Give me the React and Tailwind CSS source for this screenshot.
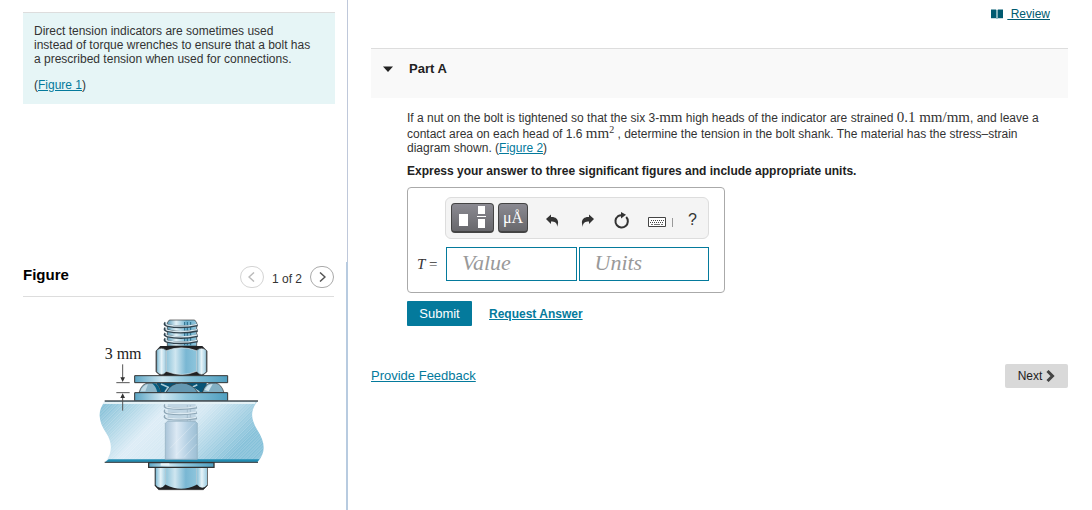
import { useState } from "react";

const LINK = "text-[#047a9c] underline";

function MathText({ children }) {
  return <span className="font-['Liberation_Serif',serif] text-[15px] leading-4">{children}</span>;
}

function Triangle() {
  return (
    <svg width="10" height="6" viewBox="0 0 10 6" aria-hidden="true">
      <path d="M0 .5h10L5 6z" fill="#222" />
    </svg>
  );
}

function BookIcon() {
  return (
    <svg width="12" height="10" viewBox="0 0 12 10" aria-hidden="true">
      <path d="M0 .5h5.2v8.5H0zM6.8.5H12v8.5H6.8z" fill="#005a70" />
      <path d="M5.2 1h1.6v9H5.2z" fill="#6fa5b2" />
      <path d="M0 9h12v.6H0z" fill="#a3c3cc" />
    </svg>
  );
}

function Chevron({ flip }) {
  return (
    <svg width="7" height="10" viewBox="0 0 7 10" fill="none" aria-hidden="true">
      <path
        d={flip ? "M6 0.5L1 5l5 4.5" : "M1 0.5L6 5 1 9.5"}
        stroke="currentColor"
        strokeWidth="1.5"
      />
    </svg>
  );
}

function BoltDrawing() {
  return (
    <svg
      width="190"
      height="190"
      viewBox="-18 0 570 570"
      role="img"
      aria-label="Bolt with a direct tension indicator"
      className="mx-auto block"
    >
      <defs>
        <linearGradient id="steel">
          <stop offset="0" stopColor="#5b9cb9" />
          <stop offset=".3" stopColor="#e4f2f8" />
          <stop offset=".65" stopColor="#6fb3d0" />
          <stop offset="1" stopColor="#8dc3da" />
        </linearGradient>
        <linearGradient id="face">
          <stop offset="0" stopColor="#8fc4da" />
          <stop offset=".3" stopColor="#cfe6f0" />
          <stop offset=".65" stopColor="#79b7d3" />
          <stop offset="1" stopColor="#8ec5dc" />
        </linearGradient>
        <linearGradient id="edge">
          <stop offset="0" stopColor="#7fbcd6" />
          <stop offset=".5" stopColor="#e6f3f8" />
          <stop offset="1" stopColor="#9bcbe0" />
        </linearGradient>
        <linearGradient id="washer">
          <stop offset="0" stopColor="#5ba5c4" />
          <stop offset=".3" stopColor="#cfe7f1" />
          <stop offset=".55" stopColor="#8fc6dc" />
          <stop offset="1" stopColor="#4f9fc0" />
        </linearGradient>
        <linearGradient id="plate" x1="0" y1="0" x2="1" y2=".35">
          <stop offset="0" stopColor="#78b9d3" />
          <stop offset=".2" stopColor="#a9d3e4" />
          <stop offset=".4" stopColor="#dcecf6" />
          <stop offset=".62" stopColor="#d2e7f2" />
          <stop offset="1" stopColor="#82bfd8" />
        </linearGradient>
        <linearGradient id="shank">
          <stop offset="0" stopColor="#a9c4d8" />
          <stop offset=".35" stopColor="#dce9f4" />
          <stop offset=".7" stopColor="#b4d0e3" />
          <stop offset="1" stopColor="#9dbfd4" />
        </linearGradient>
        <pattern id="hatch" width="13" height="13" patternUnits="userSpaceOnUse" patternTransform="rotate(-45)">
          <path d="M0 3h13M0 9h13" stroke="#fff" strokeWidth="2" opacity=".32" />
        </pattern>
      </defs>

      {/* threaded end */}
      <path d="M238 30h76l6 8v70h-88V38z" fill="url(#steel)" stroke="#333" strokeWidth="2" />
      <path d="M284 36v70M292 36v70M302 36v70" stroke="#286987" strokeWidth="3" />
      {[38, 54, 70, 86].map((y) => (
        <g key={y} fill="none">
          <path d={`M227 ${y}q-6 6 4 8q42 10 92-1`} stroke="#31424d" strokeWidth="8" />
          <path d={`M229 ${y}q-3 5 4 7q42 8 88-2`} stroke="#d5e6ee" strokeWidth="4" />
        </g>
      ))}

      {/* nut */}
      <path d="M211 108h126l15 15v62l-14 12H210l-13-12v-62z" fill="#1f2022" />
      <path d="M200 121q14-13 29 0v64q-14 18-29 0z" fill="url(#edge)" stroke="#555" strokeWidth="2" />
      <path d="M320 121q15-13 29 0v64q-14 18-29 0z" fill="url(#edge)" stroke="#555" strokeWidth="2" />
      <path d="M229 122q45-17 91 0v62q-45 19-91 0z" fill="url(#face)" stroke="#dceaf0" strokeWidth="2" />

      {/* indicator washers and heads */}
      <path d="M200 219h150v28H200z" fill="#075477" />
      <path d="M213 222l22 10-10 14M322 224l-16 8 22 14" fill="none" stroke="#a7cbd9" strokeWidth="5" />
      <path d="M147 248q8-29 30-29h16q14 0 20 29z" fill="#8db6c8" stroke="#333" strokeWidth="2" />
      <path d="M337 248q8-29 28-29h12q18 4 25 29z" fill="#83b0c4" stroke="#333" strokeWidth="2" />
      <path d="M186 220h6q14 2 20 27h-10q-4-18-16-27z" fill="#075f82" />
      <path d="M344 240q8-18 24-18l-12 22z" fill="#d0e4ed" />
      <path d="M152 244q6-18 22-21l-8 21z" fill="#c0dae5" />
      <path d="M228 248q14-29 46-29t50 29z" fill="#6498b2" stroke="#333" strokeWidth="2" />
      <path d="M134 197h279v21H134z" fill="url(#washer)" stroke="#333" strokeWidth="3" />
      <path d="M134 248h279v25H134z" fill="url(#washer)" stroke="#333" strokeWidth="3" />

      {/* clamped plate */}
      <path d="M46 273H503C478 304 484 330 502 360C524 394 530 425 503 456H46C69 427 67 396 48 368C26 335 20 303 46 273z" fill="url(#plate)" />
      <path d="M46 273H503C478 304 484 330 502 360C524 394 530 425 503 456H46C69 427 67 396 48 368C26 335 20 303 46 273z" fill="url(#hatch)" />
      <path d="M42 276H496v6H38z" fill="#e3f1f6" />
      <path d="M56 448H508l-6 8H46z" fill="#218db3" />
      <path d="M44 273h460M44 457h460" stroke="#4b5358" strokeWidth="4" />

      {/* bolt shank seen through the plate */}
      <path d="M233 282h84v52h-84z" fill="#bfd5e3" />
      <path d="M292 285v50M301 285v50" stroke="#98b2c2" strokeWidth="2" />
      {[284, 300, 316].map((y) => (
        <g key={y} fill="none">
          <path d={`M226 ${y}q-5 7 5 9q40 7 90-1`} stroke="#8da6b6" strokeWidth="7" />
          <path d={`M228 ${y}q-3 6 5 8q40 6 86-2`} stroke="#dceaf2" strokeWidth="4" />
        </g>
      ))}
      <path d="M226 340l6-6h84l6 6v108h-96z" fill="url(#shank)" stroke="#91adbe" strokeWidth="2" />
      <path d="M240 415l74-76M258 436l62-64M282 442l38-40" stroke="#fff" opacity=".4" strokeWidth="2" />

      {/* bolt head */}
      <path d="M176 458h196v14H176z" fill="url(#washer)" stroke="#333" strokeWidth="4" />
      <path d="M212 460h26v7h-26z" fill="#e7f4f9" />
      <path d="M195 473h157v54l-12 12H206l-11-12z" fill="#202124" stroke="#333" strokeWidth="2" />
      <path d="M197 474h30v49q-16 20-30 2z" fill="url(#edge)" />
      <path d="M320 474h31v51q-14 18-31-2z" fill="url(#edge)" />
      <path d="M227 474h93v50q-46 24-93 0z" fill="url(#face)" />
      <path d="M227 474v49M320 474v49" stroke="#d4e8f0" strokeWidth="2" />

      {/* dimension */}
      <text x="44" y="147" fontSize="48" fill="#222" className="font-['Liberation_Serif',serif]">3 mm</text>
      <path d="M98 163v42M98 258v44M79 218h40M79 248h40" stroke="#555" strokeWidth="3" />
      <path d="M91 202l7 14 7-14zM91 264l7-14 7 14z" fill="#333" />
    </svg>
  );
}

function FigurePanel() {
  const [page, setPage] = useState(1);
  const round = "flex h-[22px] w-[24px] items-center justify-center rounded-full border";
  return (
    <section className="flex-1 border-r-2 border-[#b8cbe0] pl-[23px] pr-[12px]">
      <div className="flex items-center justify-between border-b border-[#ddd] pb-2 pt-1">
        <h2 className="pb-1 text-[15px] font-bold leading-[18px] text-black">Figure</h2>
        <div className="flex items-center gap-2">
          <button
            type="button"
            aria-label="Previous figure"
            onClick={() => setPage(1)}
            className={`${round} border-[#d4d4d4] text-[#bbb]`}
          >
            <Chevron flip />
          </button>
          <span className="pt-1 text-[12px] leading-[14px] text-[#333]">{page} of 2</span>
          <button
            type="button"
            aria-label="Next figure"
            onClick={() => setPage(2)}
            className={`${round} border-[#aaa] text-[#555]`}
          >
            <Chevron />
          </button>
        </div>
      </div>
      <div className="pt-[13px]">
        <BoltDrawing />
      </div>
    </section>
  );
}

function Toolbar() {
  const dark =
    "flex h-[30px] items-center justify-center rounded-[4px] border border-b-2 border-[#444] bg-linear-to-b from-[#8b8a92] to-[#68686c]";
  return (
    <div className="flex h-[42px] items-center rounded-[6px] border border-[#ddd] bg-[#f4f4f4] px-[5px]">
      <button type="button" aria-label="Templates" className={`${dark} w-[43px]`}>
        <svg width="28" height="24" viewBox="0 0 28 24" fill="#fff" aria-hidden="true">
          <path d="M0 8h9v12H0zM19 0h7v8h-7zM19 13h7v9h-7z" />
          <path d="M18 10h9v1h-9z" />
        </svg>
      </button>
      <button
        type="button"
        aria-label="Symbols"
        className={`${dark} ml-1 w-[30px] font-['Liberation_Serif',serif] text-[16px] leading-4 text-white`}
      >
        μÅ
      </button>
      <button type="button" aria-label="Undo" className="ml-[18px] pt-1">
        <svg width="13" height="13" viewBox="0 0 13 13" fill="#333" aria-hidden="true">
          <path d="M0 5L5 .5v2.500C10.500 2.500 14 6.500 11 13C11.500 9 9 7.500 5 7.500v2.500z" />
        </svg>
      </button>
      <button type="button" aria-label="Redo" className="ml-[22px] pt-1">
        <svg width="13" height="13" viewBox="0 0 13 13" fill="#333" aria-hidden="true">
          <path d="M13 5L8 .5v2.500C2.500 2.500-1 6.500 2 13C1.500 9 4 7.500 8 7.500v2.500z" />
        </svg>
      </button>
      <button type="button" aria-label="Reset" className="ml-5 pt-1">
        <svg width="16" height="17" viewBox="0 0 16 17" fill="none" aria-hidden="true">
          <path d="M12.200 5A6.200 6.200 0 1 1 4 4.200Q5.500 3.200 7.500 3.200" stroke="#333" strokeWidth="2" />
          <path d="M7 0l5 2.800-5 3.700z" fill="#333" />
        </svg>
      </button>
      <button type="button" aria-label="Keyboard" className="ml-[18px] flex items-center gap-[6px] pt-2">
        <svg width="18" height="11" viewBox="0 0 18 11" fill="none" aria-hidden="true">
          <path d="M.5.5h17v9H.5z" fill="#fff" stroke="#444" />
          <path d="M3 3.500h13M2 5.500h13" stroke="#444" strokeDasharray="1 1" />
          <path d="M3 7.500h2M6 7.500h6M13 7.500h2" stroke="#777" />
        </svg>
        <span className="h-[9px] w-px bg-[#999]" />
      </button>
      <button type="button" aria-label="Help" className="ml-[15px] pt-1 text-[16px] leading-5 text-[#333]">
        ?
      </button>
    </div>
  );
}

function AnswerBox() {
  const field =
    "h-[34px] w-full min-w-0 border border-[#047a9c] bg-white px-[15px] pb-[2px] font-['Liberation_Serif',serif] text-[22px] italic leading-6 placeholder:text-[#999] placeholder:opacity-100";
  return (
    <div className="w-[318px] max-w-full rounded-[4px] border border-[#aaa] pb-[11px] pl-[9px] pr-[15px] pt-[9px]">
      <div className="pl-7">
        <Toolbar />
      </div>
      <div className="mt-2 flex items-center">
        <label
          htmlFor="tension"
          className="w-[29px] shrink-0 font-['Liberation_Serif',serif] text-[15px] text-[#333]"
        >
          <i>T</i> =
        </label>
        <div className="grid min-w-0 flex-1 grid-cols-2 gap-[2px]">
          <input id="tension" placeholder="Value" className={field} />
          <input aria-label="Units" placeholder="Units" className={field} />
        </div>
      </div>
    </div>
  );
}

export default function App() {
  return (
    <div className="flex min-h-screen bg-white font-['Liberation_Sans',Arial,sans-serif] text-[12px] leading-[14px] text-[#333]">
      <aside className="flex w-[348px] shrink-0 flex-col">
        <div className="min-h-[262px] border-r border-[#bfc8da] pl-[23px] pr-[12px] pt-3">
          <div className="border-t border-[#ddd] bg-[#e6f5f6] px-[11px] pb-3 pt-[11px]">
            <p>
              Direct tension indicators are sometimes used
              <br />
              instead of torque wrenches to ensure that a bolt has
              <br />
              a prescribed tension when used for connections.
            </p>
            <p className="mt-3">
              (<a href="#figure1" className={LINK}>Figure 1</a>)
            </p>
          </div>
        </div>
        <FigurePanel />
      </aside>

      <main className="min-w-0 flex-1 pl-[23px] pr-6">
        <div className="flex h-12 items-start justify-end gap-1 pr-[18px] pt-[7px]">
          <span className="pt-[2px]">
            <BookIcon />
          </span>
          <a href="#review" className="whitespace-pre text-[#005a70] underline"> Review</a>
        </div>

        <header className="h-[50px] border-t border-[#ddd] bg-[#f9f9f9] px-3 pt-3">
          <button type="button" aria-expanded="true" className="flex items-center gap-4 text-[13px] font-bold leading-4 text-[#222]">
            <Triangle />
            Part A
          </button>
        </header>

        <div className="pl-9 pt-[11px]">
          <p>
            If a nut on the bolt is tightened so that the six 3-<MathText>mm</MathText> high heads of the indicator are
            strained <MathText>0.1 mm/mm</MathText>, and leave a
            <br />
            contact area on each head of 1.6{" "}
            <MathText>
              mm<sup className="text-[10px] leading-[10px]">2</sup>
            </MathText>{" "}
            , determine the tension in the bolt shank. The material has the stress–strain
            <br />
            diagram shown. (<a href="#figure2" className={LINK}>Figure 2</a>)
          </p>
          <p className="mb-[9px] mt-[9px] font-bold text-[#222]">
            Express your answer to three significant figures and include appropriate units.
          </p>
          <AnswerBox />
          <div className="mt-2 flex items-center gap-[17px]">
            <button type="button" className="h-[25px] w-[65px] rounded-[1px] bg-[#047a9c] text-[13px] text-white">
              Submit
            </button>
            <a href="#answer" className="text-[12px] font-bold text-[#047a9c] underline">Request Answer</a>
          </div>
        </div>

        <div className="mt-[38px] flex items-center justify-between">
          <a href="#feedback" className="text-[13px] text-[#047a9c] underline">Provide Feedback</a>
          <button type="button" className="flex h-6 w-[63px] items-center justify-center gap-1 rounded-[2px] bg-[#d9d9d9] text-[12px] text-[#222]">
            Next
            <svg width="9" height="12" viewBox="0 0 9 12" fill="none" aria-hidden="true">
              <path d="M1.500 1L6.500 6l-5 5" stroke="#444" strokeWidth="3" />
            </svg>
          </button>
        </div>
      </main>
    </div>
  );
}
